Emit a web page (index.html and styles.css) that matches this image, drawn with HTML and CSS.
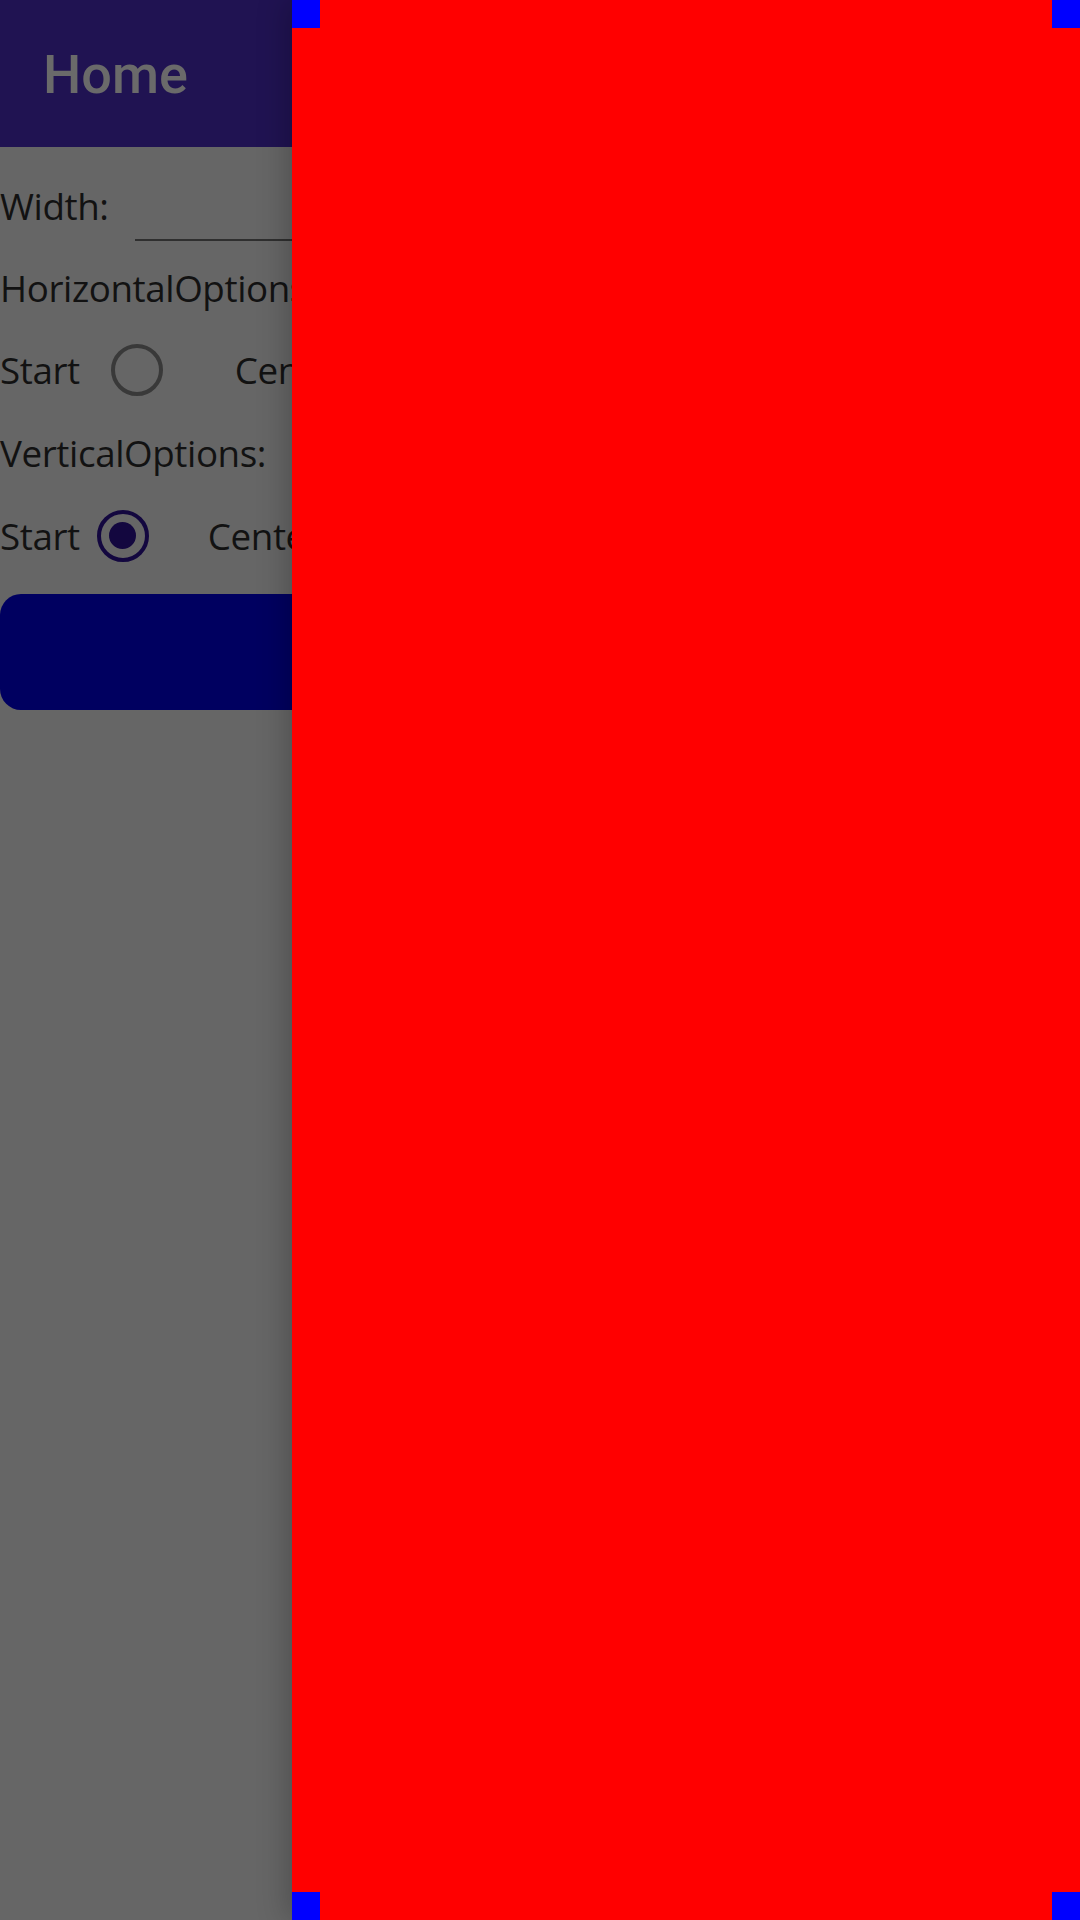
FILE: index.html
```html
<!DOCTYPE html>
<html>
<head>
<meta charset="utf-8">
<link rel="stylesheet" href="styles.css">
</head>
<body>
<div class="page">
  <header class="appbar"><span class="title">Home</span></header>
  <main class="content">
    <div class="row-entry">
      <span class="label label-width">Width:</span>
      <div class="entry"></div>
    </div>
    <div class="label row-h">HorizontalOptions:</div>
    <div class="radio-row row-h-radios">
      <span class="label">Start</span>
      <span class="radio"></span>
      <span class="label next">Center</span>
    </div>
    <div class="label">VerticalOptions:</div>
    <div class="radio-row row-v-radios">
      <span class="label">Start</span>
      <span class="radio checked"></span>
      <span class="label next">Center</span>
    </div>
    <div class="button"></div>
  </main>
</div>
<aside class="drawer">
  <span class="corner tl"></span>
  <span class="corner tr"></span>
  <span class="corner bl"></span>
  <span class="corner br"></span>
</aside>
</body>
</html>
```
FILE: styles.css
```css
html, body {
  margin: 0;
  padding: 0;
  width: 1080px;
  height: 1920px;
  overflow: hidden;
  background: #666666;
}
.page {
  width: 1080px;
  height: 1920px;
  background: #666666;
  font-family: "Open Sans", "Noto Sans", sans-serif;
  color: #121212;
}
.appbar {
  height: 147px;
  background: #201352;
  display: flex;
  align-items: center;
  padding-left: 43px;
  box-sizing: border-box;
}
.title {
  font-family: Roboto, "Noto Sans", sans-serif;
  font-weight: 500;
  font-size: 54px;
  color: #6a6a6a;
  line-height: 1;
  margin-top: 2px;
}
.content {
  display: flex;
  flex-direction: column;
  gap: 31.5px;
}
.label {
  font-size: 36.75px;
  letter-spacing: -0.4px;
  line-height: 50px;
  white-space: nowrap;
}
.row-entry {
  height: 94px;
  display: flex;
  align-items: flex-start;
  margin-bottom: -9.8px;
}
.label-width {
  margin-top: 34px;
}
.entry {
  margin-left: 26px;
  flex: 1;
  height: 94px;
  box-sizing: border-box;
  border-bottom: 2px solid #2f2f2f;
}
.radio-row {
  display: flex;
  align-items: center;
  height: 52.5px;
}
.radio {
  width: 52px;
  height: 52px;
  box-sizing: border-box;
  border-radius: 50%;
  border: 4.7px solid #393939;
  flex: none;
  position: relative;
}
.radio.checked {
  border-color: #13073f;
}
.radio.checked::after {
  content: "";
  position: absolute;
  left: 50%;
  top: 50%;
  width: 27px;
  height: 27px;
  margin: -13.5px 0 0 -13.5px;
  border-radius: 50%;
  background: #13073f;
}
.row-h-radios .radio { margin-left: 31px; }
.row-h-radios .next { margin-left: 72px; }
.row-v-radios .radio { margin-left: 17px; }
.row-v-radios .next { margin-left: 59px; }
.button {
  height: 116px;
  width: 1080px;
  background: #000060;
  border-radius: 21px;
}
.drawer {
  position: fixed;
  top: 0;
  left: 292px;
  right: 0;
  bottom: 0;
  background: #ff0000;
  box-shadow: -6px 0 28px rgba(0, 0, 0, 0.22);
}
.corner {
  position: absolute;
  width: 28px;
  height: 28px;
  background: #0000ff;
}
.corner.tl { left: 0; top: 0; }
.corner.tr { right: 0; top: 0; }
.corner.bl { left: 0; bottom: 0; }
.corner.br { right: 0; bottom: 0; }
```
